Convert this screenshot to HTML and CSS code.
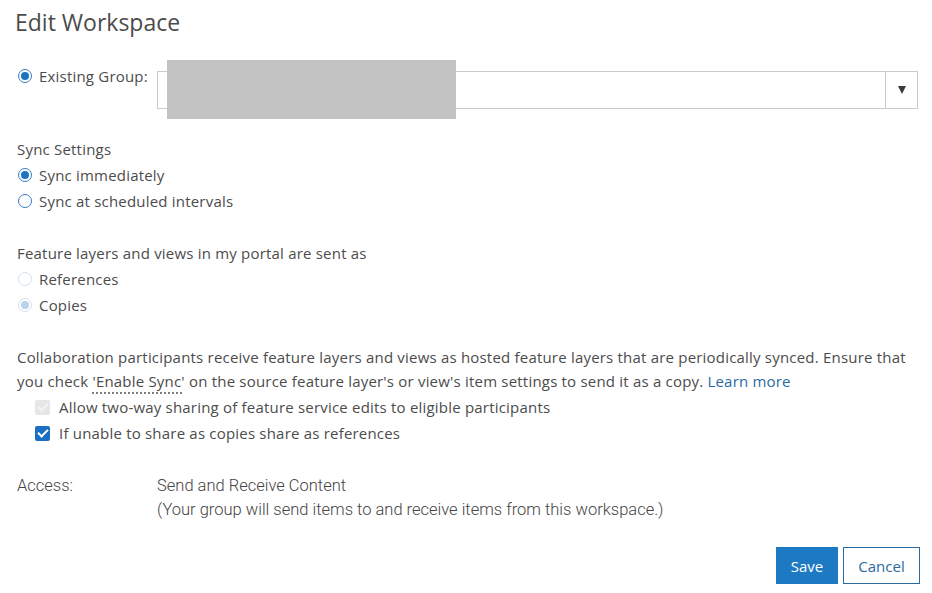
FILE: index.html
```html
<!DOCTYPE html>
<html>
<head>
<meta charset="utf-8">
<link rel="stylesheet" href="styles.css">
</head>
<body>
<div class="page">
  <h1 class="title">Edit Workspace</h1>

  <div class="group-row">
    <label class="opt">
      <span class="radio checked"></span>
      <span>Existing Group:</span>
    </label>
    <div class="select">
      <div class="select-value"></div>
      <div class="select-arrow"><span class="tri"></span></div>
    </div>
    <div class="redact"></div>
  </div>

  <div class="section sync">
    <div class="label">Sync Settings</div>
    <label class="opt"><span class="radio checked"></span><span>Sync immediately</span></label>
    <label class="opt"><span class="radio"></span><span>Sync at scheduled intervals</span></label>
  </div>

  <div class="section sent">
    <div class="label">Feature layers and views in my portal are sent as</div>
    <label class="opt"><span class="radio disabled"></span><span>References</span></label>
    <label class="opt"><span class="radio disabled checked"></span><span>Copies</span></label>
  </div>

  <div class="section collab">
    <p class="para">Collaboration participants receive feature layers and views as hosted feature layers that are periodically synced. Ensure that you check <span class="dotted">'Enable Sync'</span> on the source feature layer's or view's item settings to send it as a copy. <a class="link">Learn more</a></p>
    <div class="subs">
      <label class="opt sub"><span class="check disabled"></span><span>Allow two-way sharing of feature service edits to eligible participants</span></label>
      <label class="opt sub"><span class="check checked"></span><span>If unable to share as copies share as references</span></label>
    </div>
  </div>

  <div class="access">
    <div class="access-label">Access:</div>
    <div class="access-value">
      <div>Send and Receive Content</div>
      <div>(Your group will send items to and receive items from this workspace.)</div>
    </div>
  </div>

  <div class="actions">
    <button class="btn primary">Save</button>
    <button class="btn secondary">Cancel</button>
  </div>
</div>
</body>
</html>
```
FILE: styles.css
```css
html, body {
  margin: 0;
  padding: 0;
  background: #fff;
}
body {
  font-family: "Open Sans", Lato, sans-serif;
  color: #4c4c4c;
  font-size: 15px;
  letter-spacing: 0.2px;
}
.page {
  padding: 0 12px 0 17px;
}
.title {
  font-size: 23px;
  font-weight: 400;
  margin: 0 0 0 -2px;
  line-height: 44px;
  color: #4c4c4c;
  letter-spacing: 0;
}
.group-row {
  position: relative;
  display: flex;
  align-items: center;
  margin-top: 27px;
  height: 38px;
}
.opt {
  display: flex;
  align-items: center;
  height: 26px;
  gap: 7px;
}
.group-row .opt {
  width: 140px;
  margin-top: -29px;
}
.radio {
  width: 14px;
  height: 14px;
  border: 1px solid #3b7dbf;
  border-radius: 50%;
  box-sizing: border-box;
  flex: none;
  margin-left: 1px;
  position: relative;
  background: #fff;
}
.radio.checked::after {
  content: "";
  position: absolute;
  left: 2px;
  top: 2px;
  width: 8px;
  height: 8px;
  border-radius: 50%;
  background: #1c74c1;
}
.radio.disabled {
  border-color: #d3e2ef;
}
.radio.disabled.checked::after {
  background: #b8d3ea;
}
.select {
  flex: 1;
  display: flex;
  height: 38px;
  border: 1px solid #cacaca;
  box-sizing: border-box;
  background: #fff;
  margin-right: 2px;
}
.select-value {
  flex: 1;
}
.select-arrow {
  width: 31px;
  border-left: 1px solid #cacaca;
  display: flex;
  align-items: center;
  justify-content: center;
}
.tri {
  width: 0;
  height: 0;
  border-left: 4px solid transparent;
  border-right: 4px solid transparent;
  border-top: 8px solid #3a3a3a;
}
.redact {
  position: absolute;
  left: 150px;
  top: -11px;
  width: 289px;
  height: 59px;
  background: #c3c3c3;
}
.section {
  display: flex;
  flex-direction: column;
}
.label {
  line-height: 26px;
}
.sync {
  margin-top: 27px;
}
.sent {
  margin-top: 26px;
}
.collab {
  margin-top: 27px;
}
.para {
  margin: 0;
  line-height: 24px;
  padding-right: 0;
}
.dotted {
  text-decoration: underline dotted #555;
  text-underline-offset: 6px;
}
.link {
  color: #2b6a9f;
  text-decoration: none;
}
.subs {
  display: flex;
  flex-direction: column;
  margin-top: 1px;
}
.opt.sub {
  padding-left: 18px;
  gap: 9px;
}
.check {
  width: 15px;
  height: 15px;
  border-radius: 2px;
  box-sizing: border-box;
  flex: none;
  position: relative;
}
.check.disabled {
  background: #e6e6e6;
}
.check.disabled::after,
.check.checked::after {
  content: "";
  position: absolute;
  left: 4.5px;
  top: 1.5px;
  width: 4px;
  height: 8px;
  border-right: 2px solid #fff;
  border-bottom: 2px solid #fff;
  transform: rotate(45deg);
}
.check.disabled::after {
  border-color: #f4f4f4;
}
.check.checked {
  background: #1b6fc2;
}
.access {
  display: grid;
  grid-template-columns: 140px 1fr;
  margin-top: 28px;
  line-height: 24px;
  font-family: Roboto, sans-serif;
  font-weight: 300;
  font-size: 16.5px;
  letter-spacing: 0;
  color: #444;
}
.actions {
  display: flex;
  justify-content: flex-end;
  gap: 5px;
  margin-top: 25px;
}
.btn {
  font-family: inherit;
  font-size: 15px;
  height: 37px;
  box-sizing: border-box;
  cursor: pointer;
  padding: 0;
}
.btn.primary {
  width: 62px;
  background: #1d79c1;
  color: #fff;
  border: 1px solid #1d79c1;
}
.btn.secondary {
  width: 77px;
  background: #fff;
  color: #2b6a9f;
  border: 1px solid #2b6a9f;
}
```
